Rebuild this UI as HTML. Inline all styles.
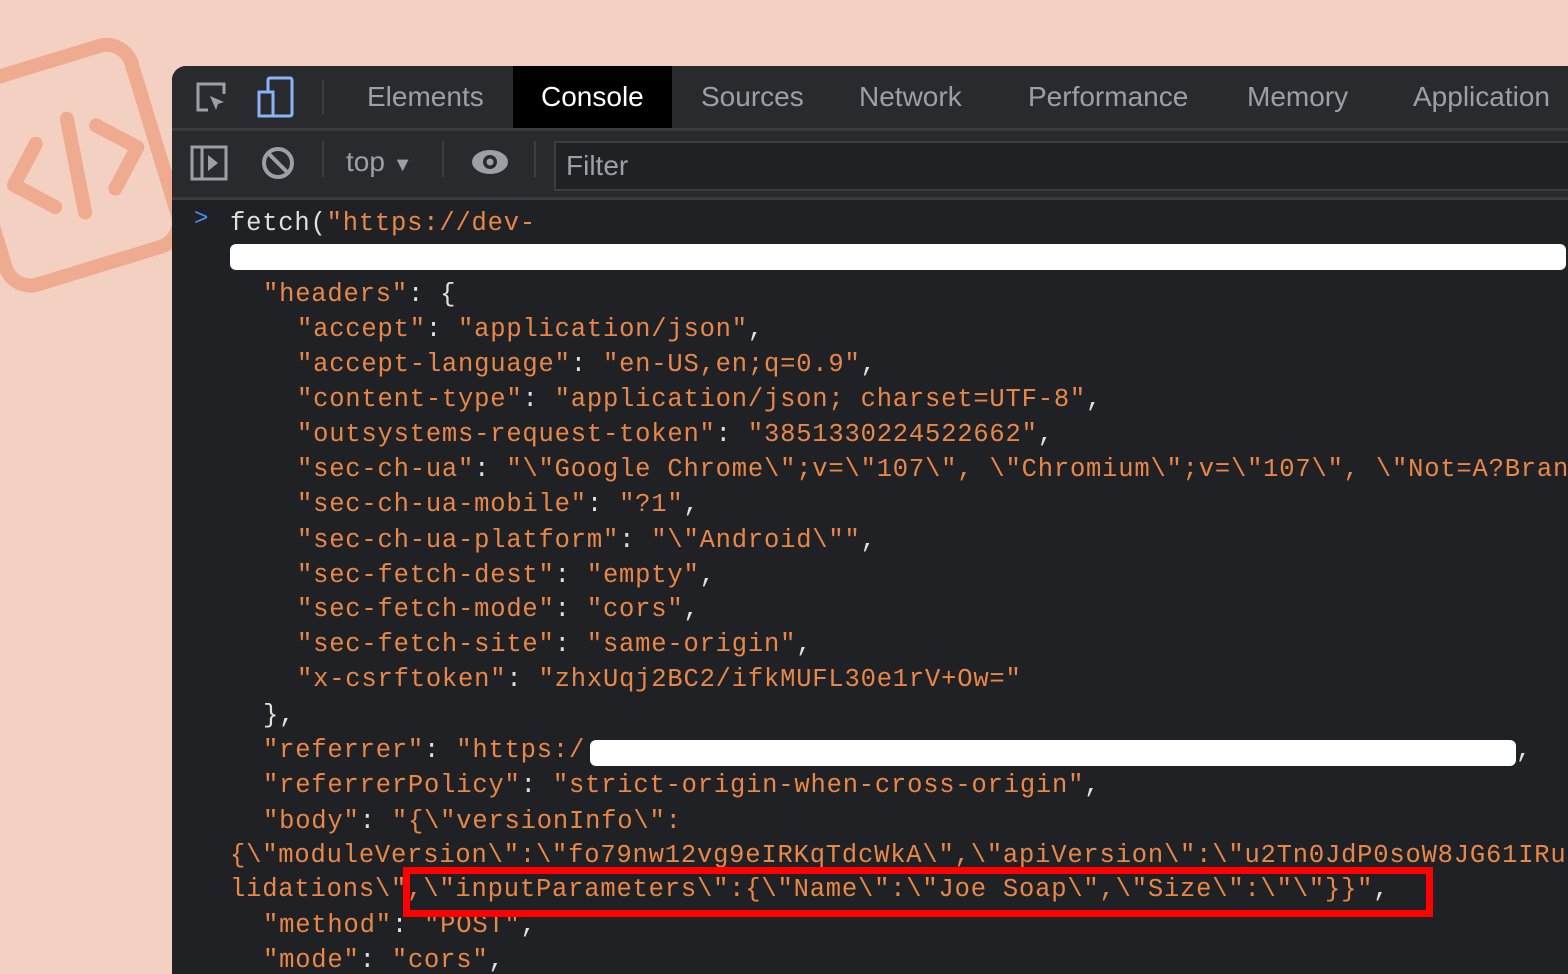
<!DOCTYPE html>
<html><head><meta charset="utf-8"><style>
html,body{margin:0;padding:0;width:1568px;height:974px;overflow:hidden;background:#f3d0c2;}
body{position:relative;font-family:"Liberation Sans",sans-serif;}
.bgicon{position:absolute;left:-50px;top:20px;width:240px;height:290px;}
.panel{position:absolute;left:172px;top:66px;width:1420px;height:920px;background:#202124;border-top-left-radius:14px;overflow:hidden;}
.tabs{position:absolute;left:0;top:0;right:0;height:62px;background:#292a2d;}
.tab{position:absolute;top:0;height:62px;line-height:62px;font-size:28px;color:#9aa0a6;}
.tab.active{background:#000;color:#fff;padding:0 28px;}
.tb{position:absolute;left:0;right:0;top:62px;height:66px;background:#292a2d;border-top:3px solid #3a3b3e;border-bottom:3px solid #3a3b3e;}
.vsep{position:absolute;width:2px;background:#3e3f42;}
.filter{position:absolute;left:382px;top:10px;right:0;height:46px;border:2px solid #3c3d40;background:#202124;color:#9aa0a6;font-size:28px;line-height:46px;padding-left:10px;}
.code{position:absolute;font-family:"Liberation Mono",monospace;font-size:25.5px;color:#e8874a;white-space:pre;line-height:35px;letter-spacing:0.8px;}
.p{color:#e0e0e0;}
.red{position:absolute;border:7px solid #ff0000;}
.white{position:absolute;background:#fff;border-radius:6px;}
</style></head><body>
<svg class="bgicon" viewBox="0 0 240 290"><g transform="rotate(-17 120 150)" fill="none" stroke="#eeab8f" stroke-width="14" stroke-linecap="round" stroke-linejoin="round"><rect x="30" y="40" width="180" height="210" rx="26"/><path d="M95 115 L62 148 L95 181"/><path d="M132 100 L122 195"/><path d="M158 115 L191 148 L158 181"/></g></svg>
<div class="panel">
 <div class="tabs">
  <svg style="position:absolute;left:22px;top:14px" width="36" height="36" viewBox="0 0 36 36"><path d="M14 30H4V4h26v10" fill="none" stroke="#9aa0a6" stroke-width="3"/><path d="M16 16l14 6-6 2-2 6z" fill="#9aa0a6"/></svg>
  <svg style="position:absolute;left:84px;top:10px" width="40" height="42" viewBox="0 0 40 42"><rect x="12" y="2" width="24" height="38" rx="2" fill="none" stroke="#8ab4f8" stroke-width="3"/><rect x="3" y="16" width="14" height="24" fill="#292a2d" stroke="#8ab4f8" stroke-width="3"/></svg>
  <div class="vsep" style="left:150px;top:14px;height:34px"></div>
  <div class="tab" style="left:195px">Elements</div>
  <div class="tab active" style="left:341px">Console</div>
  <div class="tab" style="left:529px">Sources</div>
  <div class="tab" style="left:687px">Network</div>
  <div class="tab" style="left:856px">Performance</div>
  <div class="tab" style="left:1075px">Memory</div>
  <div class="tab" style="left:1241px">Application</div>
 </div>
 <div class="tb">
  <svg style="position:absolute;left:18px;top:14px" width="38" height="36" viewBox="0 0 38 36"><rect x="2" y="2" width="34" height="32" fill="none" stroke="#9aa0a6" stroke-width="3"/><line x1="12" y1="2" x2="12" y2="34" stroke="#9aa0a6" stroke-width="3"/><path d="M18 10l10 8-10 8z" fill="#9aa0a6"/></svg>
  <svg style="position:absolute;left:88px;top:14px" width="36" height="36" viewBox="0 0 36 36"><circle cx="18" cy="18" r="14" fill="none" stroke="#9aa0a6" stroke-width="4"/><line x1="8" y1="8" x2="28" y2="28" stroke="#9aa0a6" stroke-width="4"/></svg>
  <div class="vsep" style="left:150px;top:10px;height:36px"></div>
  <div style="position:absolute;left:174px;top:8px;font-size:28px;color:#9aa0a6;line-height:46px">top <span style="font-size:20px">&#9660;</span></div>
  <div class="vsep" style="left:270px;top:10px;height:36px"></div>
  <svg style="position:absolute;left:298px;top:16px" width="40" height="30" viewBox="0 0 40 30"><ellipse cx="20" cy="15" rx="18" ry="12" fill="#9aa0a6"/><circle cx="20" cy="15" r="7" fill="#292a2d"/><circle cx="20" cy="15" r="3.5" fill="#9aa0a6"/></svg>
  <div class="vsep" style="left:362px;top:10px;height:36px"></div>
  <div class="filter">Filter</div>
 </div>
 <div style="position:absolute;left:22px;top:140px;color:#4a8cf0;font-size:24px;font-family:'Liberation Mono',monospace">&gt;</div>
</div>
<div class="code" style="left:230px;top:206px"><span class="p">fetch(</span>"https://dev-</div>
<div class="white" style="left:230px;top:244px;width:1336px;height:26px"></div>
<div class="code" style="left:263px;top:277px">"headers"<span class="p">: {</span></div>
<div class="code" style="left:297px;top:312px">"accept"<span class="p">:</span> "application/json"<span class="p">,</span></div>
<div class="code" style="left:297px;top:347px">"accept-language"<span class="p">:</span> "en-US,en;q=0.9"<span class="p">,</span></div>
<div class="code" style="left:297px;top:382px">"content-type"<span class="p">:</span> "application/json; charset=UTF-8"<span class="p">,</span></div>
<div class="code" style="left:297px;top:417px">"outsystems-request-token"<span class="p">:</span> "3851330224522662"<span class="p">,</span></div>
<div class="code" style="left:297px;top:452px">"sec-ch-ua"<span class="p">:</span> "\"Google Chrome\";v=\"107\", \"Chromium\";v=\"107\", \"Not=A?Brand\"</div>
<div class="code" style="left:297px;top:487px">"sec-ch-ua-mobile"<span class="p">:</span> "?1"<span class="p">,</span></div>
<div class="code" style="left:297px;top:523px">"sec-ch-ua-platform"<span class="p">:</span> "\"Android\""<span class="p">,</span></div>
<div class="code" style="left:297px;top:558px">"sec-fetch-dest"<span class="p">:</span> "empty"<span class="p">,</span></div>
<div class="code" style="left:297px;top:592px">"sec-fetch-mode"<span class="p">:</span> "cors"<span class="p">,</span></div>
<div class="code" style="left:297px;top:627px">"sec-fetch-site"<span class="p">:</span> "same-origin"<span class="p">,</span></div>
<div class="code" style="left:297px;top:662px">"x-csrftoken"<span class="p">:</span> "zhxUqj2BC2/ifkMUFL30e1rV+Ow="</div>
<div class="code" style="left:263px;top:698px"><span class="p">},</span></div>
<div class="code" style="left:263px;top:733px">"referrer"<span class="p">:</span> "https:/</div>
<div class="white" style="left:590px;top:740px;width:926px;height:26px"></div>
<div class="code" style="left:1516px;top:733px"><span class="p">,</span></div>
<div class="code" style="left:263px;top:768px">"referrerPolicy"<span class="p">:</span> "strict-origin-when-cross-origin"<span class="p">,</span></div>
<div class="code" style="left:263px;top:804px">"body"<span class="p">:</span> "{\"versionInfo\":</div>
<div class="code" style="left:230px;top:838px">{\"moduleVersion\":\"fo79nw12vg9eIRKqTdcWkA\",\"apiVersion\":\"u2Tn0JdP0soW8JG61IRuRw\"</div>
<div class="code" style="left:230px;top:872px">lidations\",\"inputParameters\":{\"Name\":\"Joe Soap\",\"Size\":\"\"}}"<span class="p">,</span></div>
<div class="code" style="left:263px;top:908px">"method"<span class="p">:</span> "POST"<span class="p">,</span></div>
<div class="code" style="left:263px;top:943px">"mode"<span class="p">:</span> "cors"<span class="p">,</span></div>
<div class="red" style="left:403px;top:867px;width:1016px;height:36px"></div>
</body></html>
